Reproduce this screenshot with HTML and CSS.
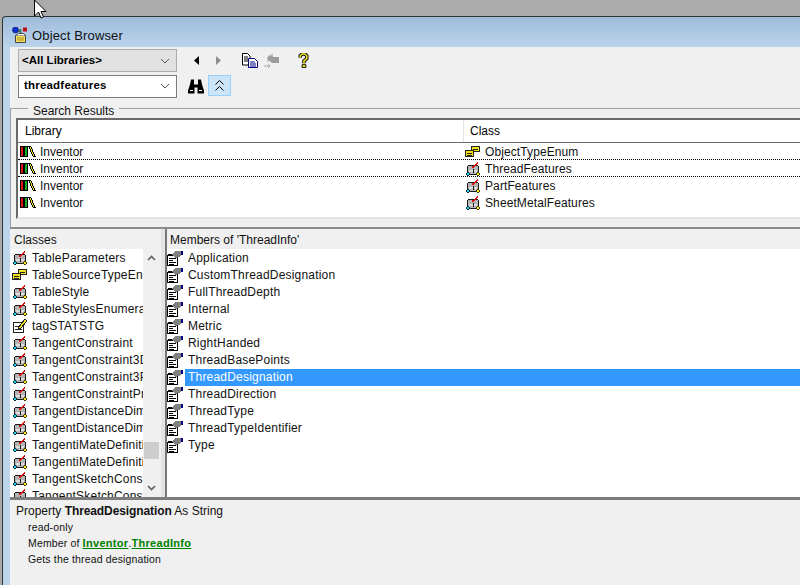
FILE: index.html
```html
<!DOCTYPE html>
<html lang="en">
<head>
<meta charset="utf-8">
<title>Object Browser</title>
<link rel="stylesheet" href="styles.css">
</head>
<body>
<svg class="defs" width="0" height="0">
  <defs>
    <symbol id="cls" viewBox="0 0 16 16">
      <path d="M3.500 4.500h9l1 1v7l-1 1h-9l-1-1v-7z" fill="#b4b4b4" stroke="#1a1a1a"/>
      <path d="M4 9h8v2H4z" fill="#dcdcdc"/>
      <path d="M7 5h2V4h1V3h1V2h1V1h1v2h-1v1h-1v1h-1v1H9v1H7z" fill="#e01010"/>
      <path d="M8 8v4" stroke="#1a1a1a"/>
      <path d="M1 12h1v-1h2v1h1v2H4v1H2v-1H1z" fill="#063040"/>
      <path d="M2 12h2v2H2z" fill="#20d0e8"/>
      <path d="M11 12h1v-1h2v1h1v2h-1v1h-2v-1h-1z" fill="#403800"/>
      <path d="M12 12h2v2h-2z" fill="#f8ec20"/>
    </symbol>
    <symbol id="enm" viewBox="0 0 16 16">
      <path d="M6.500 2.500h8v5h-8z" fill="#f2e21c" stroke="#222"/>
      <path d="M8 5h5" stroke="#222"/>
      <path d="M.5 6.500h8v6h-8z" fill="#f2e21c" stroke="#222"/>
      <path d="M2 9h5M2 11h5" stroke="#222"/>
    </symbol>
    <symbol id="typ" viewBox="0 0 16 16">
      <path d="M1.500 4.500h10v10h-10z" fill="#fff" stroke="#222"/>
      <path d="M3 8h5M3 11h7" stroke="#222"/>
      <path d="M7 9l6-8 2 2-6 7-3 1z" fill="#f2e21c" stroke="#222"/>
    </symbol>
    <symbol id="mem" viewBox="0 0 16 16">
      <path d="M.5 4.500h10v10H.5z" fill="#fff" stroke="#000"/>
      <path d="M.5 3h5v2h-5z" fill="#000"/>
      <path d="M2 7h7M2 9h4M2 11h7M2 13h5" stroke="#000"/>
      <path d="M5 4l3-4h6v5l-5 2z" fill="#808080"/>
      <path d="M14 0h2v4h-2z" fill="#000080"/>
    </symbol>
    <symbol id="lib" viewBox="0 0 16 16">
      <path d="M0 2h4v11H0z" fill="#000"/>
      <path d="M1 3h2v9H1z" fill="#e01010"/>
      <path d="M4 2h4v11H4z" fill="#000"/>
      <path d="M5 3h2v9H5z" fill="#10b020"/>
      <path d="M8 2h3l5 11h-3z" fill="#000"/>
      <path d="M9.500 3h1l4 9h-1z" fill="#f7ec20"/>
    </symbol>
  </defs>
</svg>

<main class="window">
  <header class="titlebar">
    <svg class="app-icon" width="16" height="16" viewBox="0 0 16 16">
      <circle cx="3.500" cy="3" r="3" fill="#1030d0" stroke="#001060" stroke-width=".6"/>
      <path d="M11 .5h4v4h-4z" fill="#c01010"/>
      <path d="M6 4l3-2v4z" fill="#30a050" stroke="#333" stroke-width=".5"/>
      <path d="M3.500 8.500h10v7h-10z" fill="#f0e060" stroke="#444"/>
      <path d="M3.500 8.500l3-2h5l2 2" fill="#fff" stroke="#444"/>
      <path d="M5 11h7M5 13h7" stroke="#b09020"/>
    </svg>
    <span class="title-text">Object Browser</span>
  </header>

  <div class="content">
    <section class="toolbar">
      <div class="toolbar-row">
        <div class="combo combo-gray"><b>&lt;All Libraries&gt;</b><svg class="chev" width="10" height="6" viewBox="0 0 10 6"><path d="M1 1l4 4 4-4" fill="none" stroke="#555"/></svg></div>
        <div class="tools tools-top">
          <svg class="tool tool-back" width="6" height="9" viewBox="0 0 6 9"><path d="M5 0v9L0 4.500z" fill="#000"/></svg>
          <svg class="tool tool-fwd" width="6" height="9" viewBox="0 0 6 9"><path d="M1 0v9l5-4.500z" fill="#8f8f8f"/></svg>
          <svg class="tool tool-copy" width="16" height="15" viewBox="0 0 16 15">
            <path d="M.5 .5h5l2.500 2.500v9H.5z" fill="#fff" stroke="#000"/>
            <path d="M2 4h4M2 6h4M2 8h4" stroke="#000"/>
            <path d="M6.500 5.500h6l3 3v6h-9z" fill="#fff" stroke="#000080"/>
            <path d="M8 9h5M8 11h6M8 13h6" stroke="#000080"/>
          </svg>
          <svg class="tool tool-def" width="16" height="15" viewBox="0 0 16 15">
            <path d="M5 2l2 1 1-3 1 4h6v6H8L3 6z" fill="#9c9c9c"/>
            <path d="M0 13h6M4 11l2 2-2 2M4 4v5" fill="none" stroke="#a8a8a8"/>
          </svg>
          <svg class="tool tool-help" width="11" height="15" viewBox="0 0 11 16">
            <path d="M2 5V3l2-2h3l2 2v3L6 8.500V11" fill="none" stroke="#000" stroke-width="3.600"/>
            <path d="M2 5V3l2-2h3l2 2v3L6 8.500V11" fill="none" stroke="#f7ef20" stroke-width="1.600"/>
            <path d="M4 12.500h4v3H4z" fill="#f7ef20" stroke="#000"/>
          </svg>
        </div>
      </div>
      <div class="toolbar-row">
        <div class="combo combo-white"><b>threadfeatures</b><svg class="chev" width="10" height="6" viewBox="0 0 10 6"><path d="M1 1l4 4 4-4" fill="none" stroke="#555"/></svg></div>
        <div class="tools tools-bottom">
          <svg class="tool tool-find" width="16" height="15" viewBox="0 0 16 14">
            <path d="M3 0h3v5h4V0h3l1 5 2 6v3H9.500V8h-3v6H0v-3l2-6z" fill="#000"/>
            <path d="M2 11h3M11 11h3" stroke="#fff"/>
          </svg>
          <div class="toggle">
            <svg width="9" height="11" viewBox="0 0 9 11"><path d="M.5 4.500l4-4 4 4M.5 10.500l4-4 4 4" fill="none" stroke="#000"/></svg>
          </div>
        </div>
      </div>
    </section>

    <section class="group">
      <span class="group-label">Search Results</span>
      <div class="results">
        <div class="res-head">
          <div class="col-lib head-cell">Library</div>
          <div class="col-cls head-cell">Class</div>
        </div>
        <div class="res-row dotted">
          <div class="col-lib cell"><svg class="ico"><use href="#lib"/></svg>Inventor</div>
          <div class="col-cls cell"><svg class="ico"><use href="#enm"/></svg>ObjectTypeEnum</div>
        </div>
        <div class="res-row dotted">
          <div class="col-lib cell"><svg class="ico"><use href="#lib"/></svg>Inventor</div>
          <div class="col-cls cell"><svg class="ico"><use href="#cls"/></svg>ThreadFeatures</div>
        </div>
        <div class="res-row">
          <div class="col-lib cell"><svg class="ico"><use href="#lib"/></svg>Inventor</div>
          <div class="col-cls cell"><svg class="ico"><use href="#cls"/></svg>PartFeatures</div>
        </div>
        <div class="res-row">
          <div class="col-lib cell"><svg class="ico"><use href="#lib"/></svg>Inventor</div>
          <div class="col-cls cell"><svg class="ico"><use href="#cls"/></svg>SheetMetalFeatures</div>
        </div>
      </div>
    </section>

    <section class="panes">
      <div class="pane-classes">
        <div class="pane-head">Classes</div>
        <div class="class-body">
          <ul class="list class-list">
            <li><svg class="ico"><use href="#cls"/></svg>TableParameters</li>
            <li><svg class="ico"><use href="#enm"/></svg>TableSourceTypeEnum</li>
            <li><svg class="ico"><use href="#cls"/></svg>TableStyle</li>
            <li><svg class="ico"><use href="#cls"/></svg>TableStylesEnumerator</li>
            <li><svg class="ico"><use href="#typ"/></svg>tagSTATSTG</li>
            <li><svg class="ico"><use href="#cls"/></svg>TangentConstraint</li>
            <li><svg class="ico"><use href="#cls"/></svg>TangentConstraint3Def</li>
            <li><svg class="ico"><use href="#cls"/></svg>TangentConstraint3Proxy</li>
            <li><svg class="ico"><use href="#cls"/></svg>TangentConstraintProxy</li>
            <li><svg class="ico"><use href="#cls"/></svg>TangentDistanceDimension</li>
            <li><svg class="ico"><use href="#cls"/></svg>TangentDistanceDimProxy</li>
            <li><svg class="ico"><use href="#cls"/></svg>TangentiMateDefinition</li>
            <li><svg class="ico"><use href="#cls"/></svg>TangentiMateDefinitionProxy</li>
            <li><svg class="ico"><use href="#cls"/></svg>TangentSketchConstraint</li>
            <li><svg class="ico"><use href="#cls"/></svg>TangentSketchConstraintProxy</li>
          </ul>
          <div class="scrollbar">
            <svg width="9" height="6" viewBox="0 0 9 6"><path d="M1 5l3.500-3.500L8 5" fill="none" stroke="#606060" stroke-width="1.600"/></svg>
            <div class="thumb"></div>
            <svg width="9" height="6" viewBox="0 0 9 6"><path d="M1 1l3.500 3.500L8 1" fill="none" stroke="#606060" stroke-width="1.600"/></svg>
          </div>
        </div>
      </div>
      <div class="pane-members">
        <div class="pane-head">Members of 'ThreadInfo'</div>
        <ul class="list member-list">
          <li><svg class="ico"><use href="#mem"/></svg><span>Application</span></li>
          <li><svg class="ico"><use href="#mem"/></svg><span>CustomThreadDesignation</span></li>
          <li><svg class="ico"><use href="#mem"/></svg><span>FullThreadDepth</span></li>
          <li><svg class="ico"><use href="#mem"/></svg><span>Internal</span></li>
          <li><svg class="ico"><use href="#mem"/></svg><span>Metric</span></li>
          <li><svg class="ico"><use href="#mem"/></svg><span>RightHanded</span></li>
          <li><svg class="ico"><use href="#mem"/></svg><span>ThreadBasePoints</span></li>
          <li class="selected"><svg class="ico"><use href="#mem"/></svg><span>ThreadDesignation</span></li>
          <li><svg class="ico"><use href="#mem"/></svg><span>ThreadDirection</span></li>
          <li><svg class="ico"><use href="#mem"/></svg><span>ThreadType</span></li>
          <li><svg class="ico"><use href="#mem"/></svg><span>ThreadTypeIdentifier</span></li>
          <li><svg class="ico"><use href="#mem"/></svg><span>Type</span></li>
        </ul>
      </div>
    </section>

    <section class="details">
      <p class="sig">Property <b>ThreadDesignation</b> As String</p>
      <p class="sub">read-only</p>
      <p class="sub">Member of <a class="link" href="#">Inventor</a>.<a class="link" href="#">ThreadInfo</a></p>
      <p class="sub">Gets the thread designation</p>
    </section>
  </div>
</main>

<svg class="cursor" width="14" height="20" viewBox="0 0 14 20">
  <path d="M.5 0v16l4-4 2.500 6 2.500-1-2.500-5.500H12L.5 0z" fill="#fff" stroke="#000"/>
</svg>
</body>
</html>
```
FILE: styles.css
```css
* { box-sizing: border-box; }
html, body { margin: 0; height: 100%; overflow: hidden; }
body {
  position: relative;
  background: #ababab;
  padding: 16px 0 0 2px;
  display: flex;
  font: 12px "Liberation Sans", Arial, sans-serif;
  color: #000;
}
.defs { position: absolute; }
.cursor { position: absolute; left: 34px; top: 0; }

.window {
  flex: 1;
  min-width: 0;
  border: 1px solid #333;
  border-width: 1px 0 0 1px;
  border-radius: 4px 0 0 0;
  background: linear-gradient(#9fbcdb, #bcd5ec 32px);
  padding: 0 0 0 7px;
  display: flex;
  flex-direction: column;
  overflow: hidden;
}
.titlebar {
  height: 30px;
  flex: none;
  display: flex;
  align-items: center;
  gap: 4px;
  padding: 6px 0 0 2px;
}
.app-icon { flex: none; }
.title-text { font-size: 13px; color: #111; letter-spacing: .15px; }

.content {
  flex: 1;
  background: #f0f0f0;
  display: flex;
  flex-direction: column;
  min-height: 0;
}

.toolbar { height: 61px; flex: none; padding: 2px 0 0 8px; display: flex; flex-direction: column; gap: 3px; }
.toolbar-row { display: flex; align-items: center; height: 23px; }
.combo {
  width: 159px;
  height: 23px;
  padding: 0 6px 2px 3px;
  display: flex;
  align-items: center;
  justify-content: space-between;
  flex: none;
  font-size: 11.500px;
}
.chev { margin-top: 2px; }
.combo-gray { background: #e1e1e1; border: 1px solid #adadad; }
.combo-white { background: #fff; border: 1px solid #7a7a7a; padding-left: 5px; padding-bottom: 3px; letter-spacing: .2px; }
.tools { display: flex; align-items: center; }
.tools-top { padding-left: 17px; }
.tool { flex: none; display: block; }
.tool-fwd { margin-left: 15px; }
.tool-copy { margin-left: 21px; }
.tool-def { margin-left: 6px; }
.tool-help { margin-left: 18px; }
.tools-bottom { padding-left: 11px; align-self: flex-start; }
.tool-find { margin-top: 1px; }
.toggle {
  margin-left: 4px;
  width: 23px;
  height: 21px;
  background: #cce4f7;
  border: 1px solid #99d1ff;
  display: flex;
  align-items: center;
  justify-content: center;
}

.group {
  position: relative;
  flex: none;
  height: 119px;
  border-top: 1px solid #a0a0a0;
  border-left: 1px solid #a0a0a0;
  padding: 9px 0 0 5px;
}
.group-label {
  position: absolute;
  left: 17px;
  top: -5px;
  padding: 0 5px;
  background: #f0f0f0;
  line-height: 14px;
  color: #111;
}
.results {
  height: 101px;
  background: #fff;
  border-top: 2px solid #6a6a6a;
  border-left: 2px solid #6a6a6a;
  border-bottom: 2px solid #e3e3e3;
}
.res-head { display: flex; height: 23px; border-bottom: 1px solid #6a6a6a; }
.col-lib { width: 445px; flex: none; }
.col-cls { flex: 1; }
.head-cell { line-height: 22px; padding-left: 7px; }
.head-cell.col-cls { border-left: 1px solid #e3e3e3; padding-left: 6px; }
.res-row { display: flex; height: 17px; }
.dotted { border-bottom: 1px dotted #000; padding-top: 1px; }
.cell { display: flex; align-items: center; gap: 4px; white-space: nowrap; padding-left: 2px; color: #111; }
.cell.col-cls { padding-left: 2px; letter-spacing: .1px; }
.ico { width: 16px; height: 16px; flex: none; shape-rendering: crispEdges; }

.panes {
  display: flex;
  flex: none;
  height: 270px;
  background: #e4e4e4;
  border-top: 2px solid #8c8c8c;
}
.pane-classes { width: 151px; flex: none; background: #fff; display: flex; flex-direction: column; min-height: 0; margin-right: 4px; }
.pane-members { flex: 1; background: #fff; display: flex; flex-direction: column; min-width: 0; border-left: 2px solid #777; }
.pane-head {
  height: 20px;
  flex: none;
  background: #f0f0f0;
  line-height: 20px;
  padding: 1px 0 0 4px;
  color: #111;
}
.pane-members .pane-head { padding-left: 3px; }
.class-body { flex: 1; display: flex; min-height: 0; overflow: hidden; }
.list { list-style: none; margin: 0; padding: 0; overflow: hidden; letter-spacing: .2px; }
.list li { height: 17px; flex: none; display: flex; align-items: center; gap: 4px; white-space: nowrap; padding-left: 2px; color: #111; }
.class-list { width: 133px; flex: none; }
.member-list { flex: 1; padding-top: 1px; }
.member-list li { padding-left: 0; gap: 2px; }
.member-list span { flex: 1; height: 17px; line-height: 17px; padding-left: 3px; }
.scrollbar {
  width: 18px;
  flex: none;
  background: #f0f0f0;
  display: flex;
  flex-direction: column;
  align-items: flex-start;
  padding: 6px 0 0 4px;
  position: relative;
}
.scrollbar svg:last-child { position: absolute; bottom: 6px; left: 4px; }
.thumb { position: absolute; left: 1px; top: 193px; width: 15px; height: 17px; background: #cdcdcd; }
.member-list .selected span { background: #3399ff; color: #fff; }

.details {
  flex: 1;
  background: #f0f0f0;
  border-top: 3px solid #7c7c7c;
  padding: 3px 0 0 6px;
  min-height: 0;
}
.details p { margin: 0; color: #111; }
.sig { line-height: 16px; }
.sig b { letter-spacing: -.1px; }
.sub { font-size: 10.500px; line-height: 16px; padding-left: 12px; letter-spacing: .15px; }
.link { font-size: 11px; letter-spacing: .3px; color: #008000; font-weight: bold; text-decoration: underline; }
```
